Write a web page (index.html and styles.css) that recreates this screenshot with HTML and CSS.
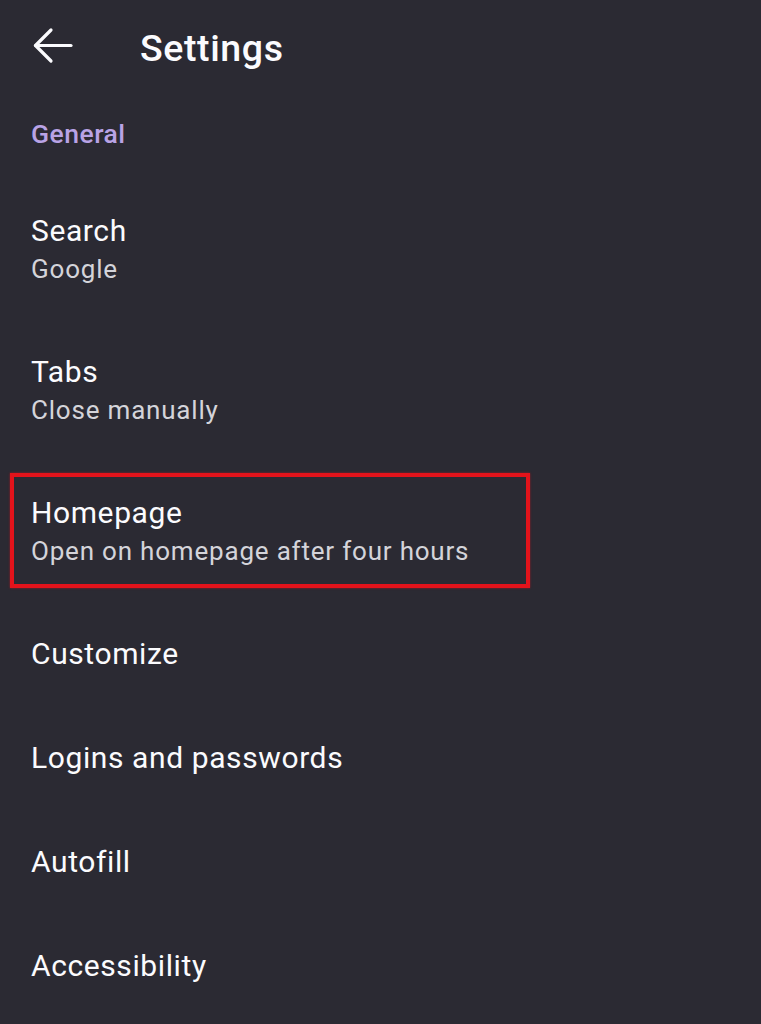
FILE: index.html
```html
<!DOCTYPE html>
<html lang="en">
<head>
<meta charset="utf-8">
<title>Settings</title>
<link rel="stylesheet" href="styles.css">
</head>
<body>
<div class="screen">
  <header class="topbar">
    <span class="back">
      <svg width="42" height="38" viewBox="0 0 42 38" fill="none" stroke="#fbfbfe" stroke-width="3.2" stroke-linecap="round" stroke-linejoin="round">
        <path d="M39 18.5 H3.5"/>
        <path d="M19 3 L3.5 18.5 L19 34"/>
      </svg>
    </span>
    <h1 class="title">Settings</h1>
  </header>
  <div class="section-label">General</div>
  <ul class="list">
    <li class="item"><div class="item-title">Search</div><div class="item-sub">Google</div></li>
    <li class="item"><div class="item-title">Tabs</div><div class="item-sub">Close manually</div></li>
    <li class="item highlighted"><div class="item-title">Homepage</div><div class="item-sub">Open on homepage after four hours</div></li>
    <li class="item"><div class="item-title">Customize</div></li>
    <li class="item"><div class="item-title">Logins and passwords</div></li>
    <li class="item"><div class="item-title">Autofill</div></li>
    <li class="item"><div class="item-title">Accessibility</div></li>
  </ul>
</div>
</body>
</html>
```
FILE: styles.css
```css
html, body {
  margin: 0;
  padding: 0;
  background: #2b2a33;
}
body {
  font-family: Roboto, "Noto Sans", "Liberation Sans", sans-serif;
  color: #fbfbfe;
  width: 761px;
  height: 1024px;
  overflow: hidden;
}
.screen {
  display: flex;
  flex-direction: column;
}
.topbar {
  display: flex;
  align-items: center;
  padding: 24px 0 0 0;
  height: 48px;
}
.back {
  display: flex;
  width: 42px;
  height: 38px;
  margin-left: 32px;
  margin-top: -4px;
}
.title {
  margin: 0 0 0 66px;
  font-size: 37.5px;
  line-height: 48px;
  font-weight: 500;
  letter-spacing: 0.6px;
  color: #fbfbfe;
}
.section-label {
  margin-top: 44px;
  padding-left: 31px;
  font-size: 26.5px;
  line-height: 36px;
  font-weight: 500;
  letter-spacing: 0.5px;
  color: #b9a3e6;
}
.list {
  list-style: none;
  margin: 27px 0 0 0;
  padding: 0;
}
.item {
  position: relative;
  padding: 32px 0 32px 31px;
  display: flex;
  flex-direction: column;
}
.item-title {
  font-size: 30px;
  line-height: 40px;
  letter-spacing: 0.6px;
  color: #fbfbfe;
}
.item-sub {
  font-size: 26px;
  line-height: 37px;
  letter-spacing: 0.8px;
  color: #d4d4da;
}
.highlighted::after {
  content: "";
  position: absolute;
  left: 10px;
  top: 12px;
  width: 512px;
  height: 107px;
  border: 4px solid #e3131b;
  box-shadow: 0 0 2px rgba(227, 19, 27, 0.6);
}
```
